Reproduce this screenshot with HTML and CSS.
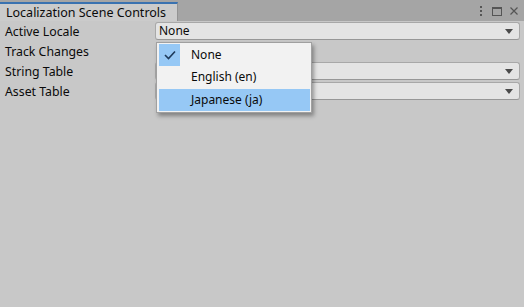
FILE: index.html
```html
<!DOCTYPE html>
<html lang="en">
<head>
    <meta charset="UTF-8">
    <title>Localization Scene Controls</title>
    <link rel="stylesheet" href="styles.css">
</head>
<body>
    <div class="tab-bar">
        <div class="tab">Localization Scene Controls</div>
        <div class="window-buttons">
            <svg width="4" height="12" viewBox="0 0 4 12"><rect x="1" y="1" width="2" height="2" fill="#555"/><rect x="1" y="5" width="2" height="2" fill="#555"/><rect x="1" y="9" width="2" height="2" fill="#555"/></svg>
            <svg width="10" height="9" viewBox="0 0 10 9"><rect x="0.5" y="0.5" width="9" height="8" fill="none" stroke="#555"/><rect x="0" y="0" width="10" height="2" fill="#555"/></svg>
            <svg width="8" height="8" viewBox="0 0 8 8"><path d="M0.5 0.5 L7.5 7.5 M7.5 0.5 L0.5 7.5" stroke="#555" stroke-width="1.2"/></svg>
        </div>
    </div>

    <div class="panel">
        <div class="row">
            <span class="label">Active Locale</span>
            <div class="field"><span>None</span><span class="arrow"></span></div>
        </div>
        <div class="row">
            <span class="label">Track Changes</span>
        </div>
        <div class="row">
            <span class="label">String Table</span>
            <div class="field"><span></span><span class="arrow"></span></div>
        </div>
        <div class="row">
            <span class="label">Asset Table</span>
            <div class="field"><span></span><span class="arrow"></span></div>
        </div>
    </div>

    <!-- Open locale menu -->
    <div class="menu">
        <div class="menu-item checked">
            <span class="check">
                <svg width="12" height="10" viewBox="0 0 12 10"><path d="M1 5 L4.5 8.5 L11 1.5" fill="none" stroke="#1e3a5a" stroke-width="1.6"/></svg>
            </span>
            <span>None</span>
        </div>
        <div class="menu-item">
            <span class="check"></span>
            <span>English (en)</span>
        </div>
        <div class="menu-item selected">
            <span class="check"></span>
            <span>Japanese (ja)</span>
        </div>
    </div>
</body>
</html>
```

FILE: styles.css
```css
body {
    margin: 0;
    background-color: #c8c8c8;
    font-family: 'Noto Sans', 'Open Sans', sans-serif;
    font-size: 12px;
    color: #0a0a0a;
    position: relative;
    height: 307px;
    overflow: hidden;
}

/* Tab bar */
.tab-bar {
    height: 21px;
    background-color: #a5a5a5;
    display: flex;
    align-items: flex-end;
    justify-content: space-between;
}

.tab {
    width: 171px;
    height: 17px;
    padding-left: 6px;
    background-color: #cbcbcb;
    border-top: 2px solid #3a72b0;
    border-right: 1px solid #939393;
    line-height: 18px;
    font-size: 12.5px;
}

.window-buttons {
    align-self: center;
    display: flex;
    align-items: center;
    gap: 9px;
    padding-right: 6px;
    margin-top: 1px;
}

.window-buttons svg + svg + svg {
    margin-left: -1px;
}

/* Inspector rows */
.panel {
    padding: 0 4px 0 5px;
}

.row {
    height: 20px;
    display: flex;
    align-items: flex-start;
}

.label {
    width: 150px;
    padding-top: 1px;
    line-height: 20px;
    white-space: nowrap;
    font-size: 12.3px;
}

.field {
    flex: 1;
    height: 16px;
    margin-top: 1px;
    background-color: #e4e4e4;
    border: 1px solid #a8a8a8;
    border-bottom-color: #979797;
    border-radius: 3px;
    display: flex;
    align-items: center;
    justify-content: space-between;
    padding: 0 6px 0 3px;
    line-height: 16px;
}

.arrow {
    width: 0;
    height: 0;
    border-left: 4px solid transparent;
    border-right: 4px solid transparent;
    border-top: 5px solid #4a4a4a;
}

/* Popup menu */
.menu {
    position: absolute;
    left: 156px;
    top: 42px;
    width: 151px;
    padding: 1px 1px 1px 2px;
    background-color: #f2f2f2;
    border: 1px solid #a0a0a0;
    box-shadow: 2px 3px 4px rgba(0, 0, 0, 0.35);
}

.menu-item {
    height: 22px;
    display: flex;
    align-items: center;
    gap: 11px;
    font-size: 12px;
    line-height: 20px;
    padding-bottom: 1px;
    box-sizing: border-box;
}

.menu-item .check {
    width: 21px;
    height: 22px;
    margin-bottom: -1px;
    display: flex;
    align-items: center;
    justify-content: center;
}

.menu-item.checked .check {
    background-color: #96c8f5;
}

.menu-item.selected {
    background-color: #96c8f5;
    margin-top: 1px;
}
```
